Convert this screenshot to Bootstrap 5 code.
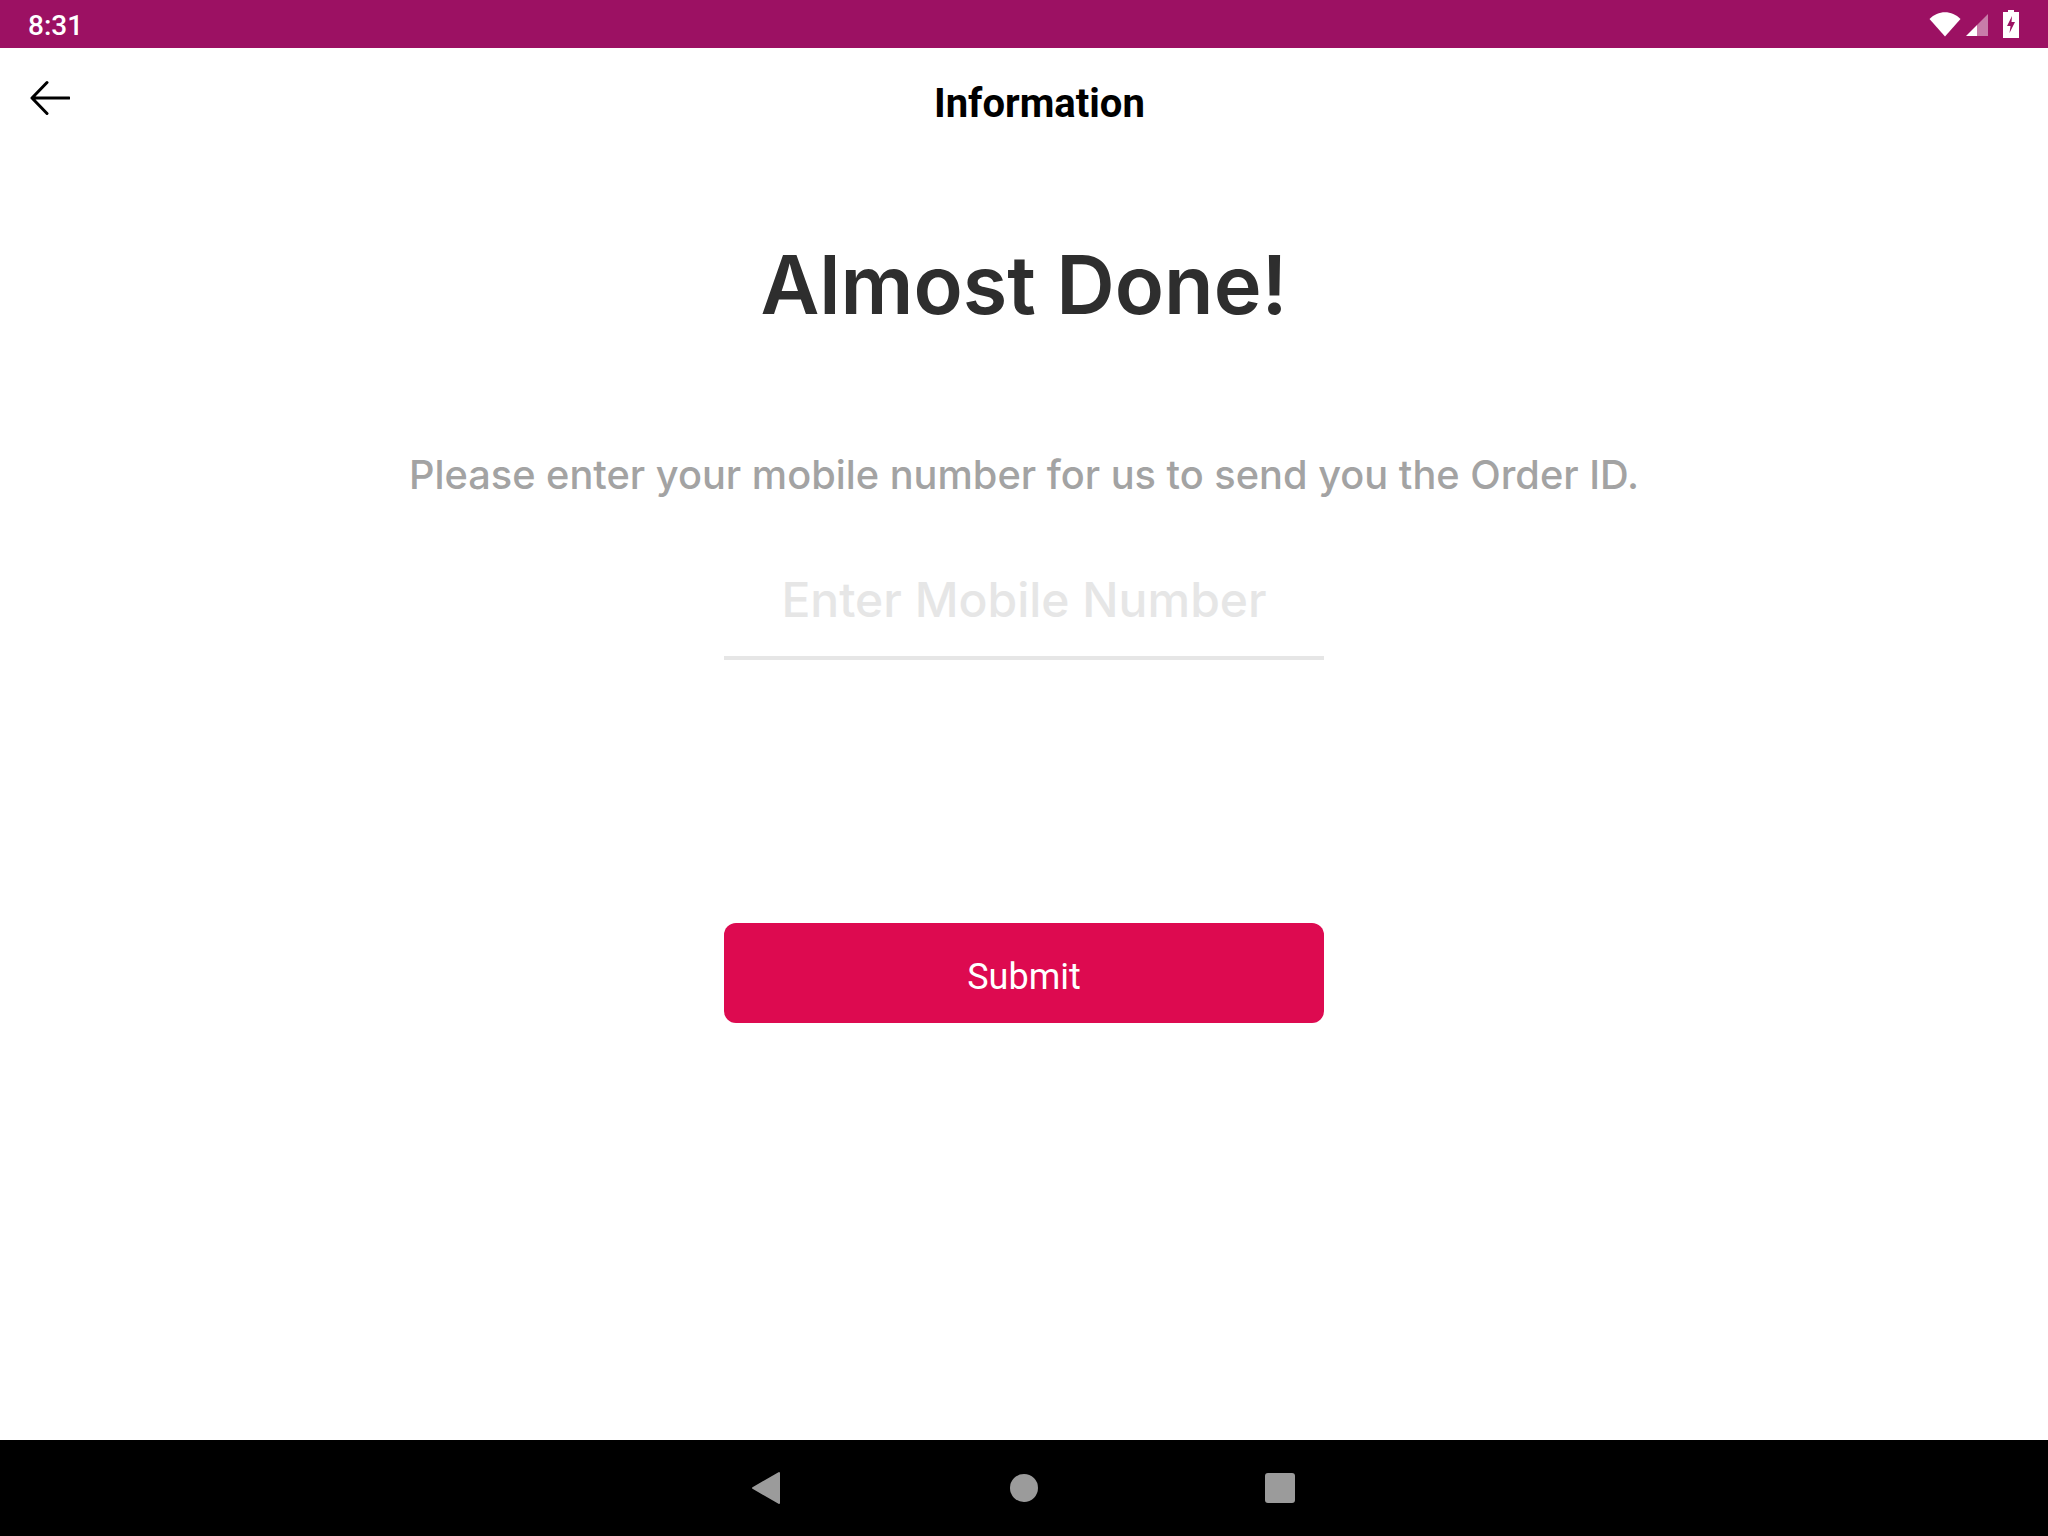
<!DOCTYPE html>
<html lang="en">
<head>
  <meta charset="UTF-8">
  <title>Information</title>
  <link rel="stylesheet" href="https://cdn.jsdelivr.net/npm/bootstrap@5.3.0/dist/css/bootstrap.min.css">
  <style>
    body { width: 2048px; height: 1536px; overflow: hidden; font-family: Inter, "Liberation Sans", sans-serif; }
    .status-bar { height: 48px; background: #9c1163; padding: 0 29px 0 28px; }
    .status-time { font: 500 28px Roboto, sans-serif; margin-top: 2px; }
    .signal-icon { margin-left: 4px; margin-top: 2px; }
    .battery-icon { margin-left: 14px; }
    .app-head { height: 96px; padding-left: 30px; }
    .back-arrow { margin-top: 3px; }
    .app-title { font: 700 40px Roboto, sans-serif; color: #000; margin-left: 864px; margin-top: 14px; }
    .screen { flex: 1; }
    .main-title { font: 600 81px/96px Inter, sans-serif; color: #2e2e2e; margin-top: 93px; }
    .sub-title { font: 500 39.75px/48px Inter, sans-serif; color: #a3a3a3; margin-top: 118px; }
    .phone-box { width: 600px; height: 93px; border-bottom: 4px solid #e6e6e6; margin-top: 68px; }
    .phone-box input { border: 0; outline: 0; width: 100%; padding-top: 3px; text-align: center; font: 500 48px/60px Inter, sans-serif; background: transparent; }
    .phone-box input::placeholder { color: #e6e6e6; opacity: 1; }
    .btn-submit { width: 600px; height: 100px; margin-top: 263px; padding-top: 14px; background: #dd0a50; border: 0; border-radius: 12px; color: #fff; font: 400 36px Roboto, sans-serif; }
    .btn-submit:hover { background: #dd0a50; color: #fff; }
    .nav-keys { height: 96px; background: #000; }
    .key-home { margin: 0 227px; }
  </style>
</head>
<body class="d-flex flex-column">
  <div class="status-bar d-flex align-items-center justify-content-between text-white">
    <span class="status-time">8:31</span>
    <div class="d-flex align-items-center">
      <svg width="32" height="26" viewBox="0 0 32 26"><path d="M0.500 8 C9 -1 23 -1 31.500 8 L16 25.500 Z" fill="#fff"/></svg>
      <svg class="signal-icon" width="24" height="24" viewBox="0 0 24 24"><path d="M23 1 V23 H12 V12 Z" fill="#fff" fill-opacity=".45"/><path d="M12 12 V23 H1 Z" fill="#fff"/></svg>
      <svg class="battery-icon" width="16" height="28" viewBox="0 0 16 28"><path d="M5 0 H11 V2 H16 V28 H0 V2 H5 Z" fill="#fff"/><path d="M9 6 L4 16 H7.500 L6.500 23 L12 12 H8.500 Z" fill="#9c1163"/></svg>
    </div>
  </div>
  <div class="app-head d-flex align-items-center">
    <svg class="back-arrow" width="40" height="36" viewBox="0 0 40 36" fill="none" stroke="#000" stroke-width="3" stroke-linecap="round" stroke-linejoin="round"><path d="M2 18 H39 M17 2.500 L2 18 L17 33.500"/></svg>
    <div class="app-title">Information</div>
  </div>
  <main class="screen d-flex flex-column align-items-center">
    <h1 class="main-title mb-0">Almost Done!</h1>
    <p class="sub-title mb-0">Please enter your mobile number for us to send you the Order ID.</p>
    <div class="phone-box"><input type="text" placeholder="Enter Mobile Number"></div>
    <button type="button" class="btn btn-submit">Submit</button>
  </main>
  <div class="nav-keys d-flex align-items-center justify-content-center">
    <svg width="31" height="34" viewBox="0 0 31 34"><path d="M27 2 V32 L1 17 Z" fill="#9b9b9b" stroke="#9b9b9b" stroke-linejoin="round" stroke-width="2"/></svg>
    <svg class="key-home" width="28" height="28" viewBox="0 0 28 28"><circle cx="14" cy="14" r="14" fill="#9b9b9b"/></svg>
    <svg width="31" height="30" viewBox="0 0 31 30"><rect width="30" height="30" rx="3" fill="#9b9b9b"/></svg>
  </div>
</body>
</html>
